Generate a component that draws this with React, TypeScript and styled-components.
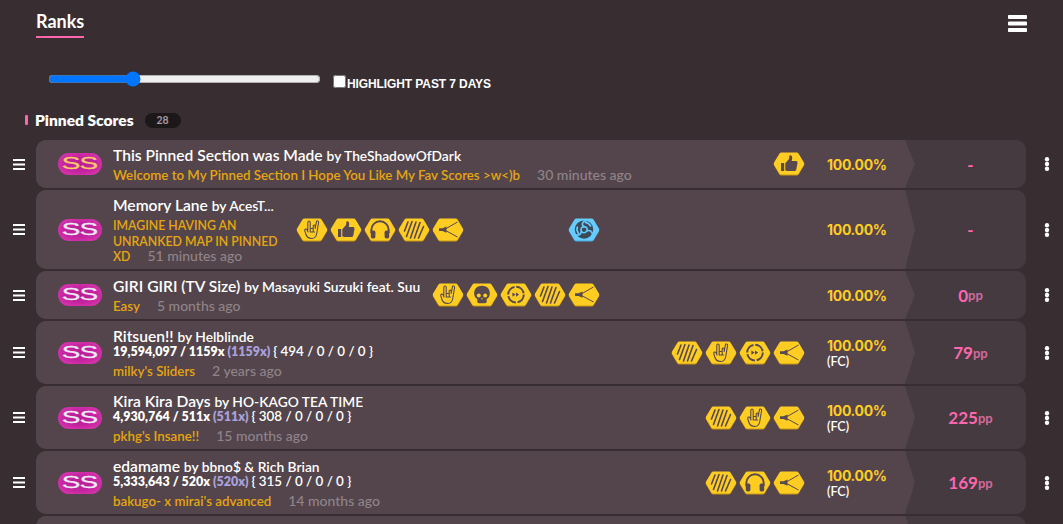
import React from "react";
import styled, { createGlobalStyle } from "styled-components";

const Global = createGlobalStyle`
  html, body { margin: 0; padding: 0; background: #382e32; }
  body { font-family: "Lato", "Noto Sans", sans-serif; color: #fff; }
  #root { height: 524px; overflow: hidden; }
`;

const Page = styled.div`
  height: 524px;
  overflow: hidden;
  background: #382e32;
`;
const Header = styled.header`
  display: flex;
  justify-content: space-between;
  align-items: flex-start;
  padding: 11px 36px 0;
  height: 27px;
`;
const Tab = styled.div`
  font-size: 18px;
  font-weight: 700;
  line-height: 20px;
  height: 25px;
  width: 48px;
  border-bottom: 2px solid #ff66ab;
`;
const Burger = styled.svg`
  width: 19px;
  height: 17px;
  margin-top: 4px;
  display: block;
`;
const Controls = styled.div`
  display: flex;
  align-items: flex-start;
  margin-top: 33px;
  padding-left: 48px;
  height: 35px;
`;
const Slider = styled.input`
  width: 273px;
  height: 16px;
  margin: 0;
`;
const Check = styled.input`
  width: 13px;
  height: 13px;
  margin: 4px 0 0 12px;
`;
const CheckLabel = styled.label`
  font-family: "Liberation Sans", sans-serif;
  font-size: 12px;
  font-weight: 700;
  line-height: 14px;
  margin: 6px 0 0 1px;
  letter-spacing: -0.1px;
`;
const SectionHead = styled.div`
  display: flex;
  align-items: center;
  height: 22px;
  margin: 3px 0 9px 25px;
`;
const SectionBar = styled.span`
  width: 3px;
  height: 10px;
  background: #ff66ab;
  border-radius: 1px;
  margin-right: 7px;
`;
const SectionTitle = styled.span`
  font-size: 15.5px;
  font-weight: 800;
`;
const Count = styled.span`
  margin-left: 11px;
  width: 36px;
  height: 15px;
  line-height: 15px;
  text-align: center;
  border-radius: 8px;
  background: #1c1719;
  color: #a39aa0;
  font-size: 10.5px;
  font-weight: 700;
`;
const List = styled.div`
  display: flex;
  flex-direction: column;
  gap: 2px;
`;
const RowWrap = styled.div`
  display: flex;
  align-items: stretch;
`;
const Handle = styled.div`
  width: 36px;
  box-sizing: border-box;
  display: flex;
  align-items: center;
  justify-content: center;
  padding-left: 2px;
`;
const Card = styled.div`
  flex: 0 0 990px;
  display: flex;
  background: #463a41;
  border-radius: 10px;
  overflow: hidden;
  min-height: 48px;
`;
const Main = styled.div`
  flex: 0 0 879px;
  display: flex;
  align-items: center;
  background: #54454c;
  clip-path: polygon(0 0, 869px 0, 100% 50%, 869px 100%, 0 100%);
`;
const RankCell = styled.div`
  flex: 0 0 77px;
  display: flex;
  justify-content: center;
  padding-left: 11px;
  box-sizing: border-box;
`;
const RankPill = styled.div<{ $gold?: boolean }>`
  width: 44px;
  height: 22px;
  border-radius: 11px;
  background: radial-gradient(ellipse at center, #b81d94 0%, #c4249f 50%, #e23fb6 100%);
  display: flex;
  align-items: center;
  justify-content: center;
  font-family: "Liberation Sans", sans-serif;
  font-size: 18px;
  line-height: 22px;
  letter-spacing: -0.5px;
  color: ${(p) => (p.$gold ? "#ffc96a" : "#efe8f8")};
  -webkit-text-stroke: 0.3px ${(p) => (p.$gold ? "#ffc96a" : "#efe8f8")};
`;
const RankText = styled.span`
  display: block;
  transform: scaleX(1.55) scaleY(0.9);
`;
const Info = styled.div<{ $narrow?: boolean }>`
  flex: 0 0 ${(p) => (p.$narrow ? "173px" : "auto")};
  width: ${(p) => (p.$narrow ? "173px" : "auto")};
  align-self: flex-start;
  padding: 7px 0 4.5px;
`;
const Title = styled.div`
  font-size: 15.6px;
  font-weight: 600;
  line-height: 16px;
  white-space: nowrap;
  overflow: hidden;
  text-overflow: ellipsis;
`;
const Artist = styled.span`
  font-size: 13.8px;
  line-height: 0;
`;
const Stats = styled.div`
  font-size: 12.5px;
  font-weight: 800;
  line-height: 16px;
  white-space: nowrap;
`;
const Combo = styled.span`
  color: #a9a1db;
`;
const Judge = styled.span`
  font-size: 13.4px;
  font-weight: 600;
  line-height: 0;
`;
const Sub = styled.div<{ $tight?: boolean; $upper?: boolean }>`
  margin-top: ${(p) => (p.$tight ? "4px" : "5px")};
  font-size: ${(p) => (p.$upper ? "12.3px" : "13.3px")};
  font-weight: 600;
  line-height: 15.5px;
  color: #e5a50f;
`;
const Ago = styled.span`
  color: #8f8488;
  font-size: 14px;
  line-height: 0;
  font-weight: 500;
  margin-left: 17px;
  white-space: nowrap;
`;
const ModArea = styled.div<{ $inset: number; $split: boolean }>`
  flex: 1;
  min-width: 0;
  display: flex;
  justify-content: ${(p) => (p.$split ? "space-between" : "flex-end")};
  padding: 0 ${(p) => p.$inset}px 0 10px;
`;
const ModGroup = styled.div`
  display: flex;
  gap: 2px;
`;
const ModSvg = styled.svg`
  width: 32px;
  height: 24px;
  display: block;
  flex: none;
`;
const AccCell = styled.div<{ $fc?: boolean }>`
  flex: 0 0 88px;
  padding-top: ${(p) => (p.$fc ? "3px" : "0")};
  box-sizing: border-box;
`;
const Acc = styled.div`
  font-family: "Inter", sans-serif;
  font-size: 14px;
  font-weight: 700;
  line-height: 15px;
  color: #ffcc22;
  letter-spacing: -0.3px;
`;
const FC = styled.div`
  font-size: 12.5px;
  font-weight: 600;
  line-height: 17px;
`;
const PpCell = styled.div`
  flex: 1;
  display: flex;
  align-items: center;
  justify-content: center;
  color: #ff66ab;
  font-size: 17px;
  font-weight: 700;
`;
const PpUnit = styled.span`
  font-size: 13px;
  color: #d26a9a;
`;
const Kebab = styled.div`
  width: 37px;
  box-sizing: border-box;
  padding-left: 5px;
  display: flex;
  align-items: center;
  justify-content: center;
`;

const ink = "#57494f";

const hexPath =
  "M8.5 .6H23.5Q25 .6 25.8 1.9L30.9 10.4Q31.6 11.6 30.9 12.8L25.8 21.3Q25 22.6 23.5 22.6H8.5Q7 22.6 6.2 21.3L1.1 12.8Q.4 11.6 1.1 10.4L6.2 1.9Q7 .6 8.5 .6Z";

const glyphs: Record<string, React.ReactNode> = {
  rock: (
    <path
      d="M11.8 12V4.5Q11.8 3 13 3T14.2 4.5V10.5H17.2V8Q17.2 7 18.2 7T19.2 8V10.5L20.4 3.8Q20.7 2.7 21.7 3T22.6 4.3L21 14Q20.4 20.5 15.8 20.5Q11 20.5 9.8 16L8.8 12.8Q8.5 11.4 9.5 11.1T11.2 12L12 14M14.2 14V10.5M17.2 14V10.5M14.2 14H18.5"
      fill="none"
      stroke={ink}
      strokeWidth="1.1"
      strokeLinejoin="round"
      strokeLinecap="round"
    />
  ),
  thumb: (
    <path
      d="M8 11H11.2V19H8ZM12.3 11.2L15.6 7.5Q16.5 6.4 16.3 4.2Q16.4 2.9 17.6 3.2Q19.8 4 19 7.6L18.7 9H23.2Q24.8 9.2 24.5 11L23.3 17.5Q22.9 19 21.5 19H14.6Q13.2 19 12.3 18.2Z"
      fill={ink}
    />
  ),
  phones: (
    <>
      <path d="M7.3 15V12A8.7 8.7 0 0 1 24.7 12V15" fill="none" stroke={ink} strokeWidth="1.9" />
      <rect x="6.8" y="12.5" width="4.6" height="8" rx="1.7" fill={ink} />
      <rect x="20.6" y="12.5" width="4.6" height="8" rx="1.7" fill={ink} />
    </>
  ),
  stripes: (
    <g stroke={ink} strokeWidth="1.6" strokeLinecap="round">
      <path d="M6.5 13L10 4M8.5 18.5L14 3.5M12.5 20L18 4M16.5 20L22 4.5M20.5 20L25.5 8.5" />
    </g>
  ),
  torch: (
    <>
      <path d="M7 10.2H10.5L14.5 8.5V14.8L10.5 13H7Z" fill={ink} />
      <path d="M14.2 10.5L25.5 4M14.2 12.8L25.5 19" stroke={ink} strokeWidth="1" fill="none" />
    </>
  ),
  skull: (
    <>
      <path
        d="M16 2.8C10.2 2.8 8 7 8.2 11C8.3 13.7 9.8 15.3 11.3 16.1V18.6Q11.3 20.2 13 20.2H19Q20.7 20.2 20.7 18.6V16.1C22.2 15.3 23.7 13.7 23.8 11C24 7 21.8 2.8 16 2.8Z"
        fill={ink}
      />
      <circle cx="12.8" cy="12.4" r="2" fill="#ffcc22" />
      <circle cx="19.2" cy="12.4" r="2" fill="#ffcc22" />
      <path d="M15.1 16.2H16.9L16 14.6Z" fill="#ffcc22" />
    </>
  ),
  rate: (
    <>
      <circle cx="16" cy="11.6" r="7.8" fill="none" stroke={ink} strokeWidth="2" strokeDasharray="10.5 1.75" />
      <path d="M12.4 9.4L15.6 11.6L12.4 13.8ZM16 9.4L19.2 11.6L16 13.8Z" fill={ink} />
    </>
  ),
  swirl: (
    <>
      <circle cx="16" cy="11.6" r="9.2" fill="#3b4a58" />
      <g fill="none" stroke="#66ccff" strokeWidth="1.6" strokeLinecap="round">
        <path d="M16 8.6C13 6.6 14.2 3.6 18.2 2.6" />
        <path d="M18.6 13.1C21.8 11.5 24.4 13.5 24.8 17.6" />
        <path d="M13.4 13.1C13.2 16.8 10.2 18 6.8 16.4" />
        <path d="M16 8.6C18.6 8.8 20 10.6 18.6 13.1C17.2 15.4 14.8 15.2 13.4 13.1C12.2 11 13.6 8.6 16 8.6Z" />
        <path d="M22.6 8C21.2 5.6 19.4 4.6 17.4 4.4" />
        <path d="M9.4 9.2C8.4 11.4 9 13.6 10.6 15.6" />
      </g>
    </>
  ),
};

function Mod({ type }: { type: string }) {
  const blue = type === "swirl";
  const id = `clip-${type}`;
  return (
    <ModSvg viewBox="0 0 32 24" aria-hidden>
      <defs>
        <clipPath id={id}>
          <path d={hexPath} />
        </clipPath>
      </defs>
      <path d={hexPath} transform="translate(0 1)" fill={blue ? "#4aa6d8" : "#c99a12"} />
      <path d={hexPath} fill={blue ? "#66ccff" : "#ffcc22"} />
      <g clipPath={`url(#${id})`}>{glyphs[type]}</g>
    </ModSvg>
  );
}

const Bars = () => (
  <svg width="12" height="11" viewBox="0 0 12 11" aria-hidden>
    <path d="M0 0h12v2H0zM0 4.5h12v2H0zM0 9h12v2H0z" fill="#fff" />
  </svg>
);
const Dots = () => (
  <svg width="6" height="14" viewBox="0 0 6 14" aria-hidden>
    <circle cx="3" cy="2.2" r="2.2" fill="#fff" />
    <circle cx="3" cy="7" r="2.2" fill="#fff" />
    <circle cx="3" cy="11.8" r="2.2" fill="#fff" />
  </svg>
);

type Score = {
  title: string;
  artist: string;
  stats?: [string, string, string];
  sub: string;
  ago: string;
  mods: string[];
  extra?: string[];
  inset: number;
  fc?: boolean;
  pp: string;
  gold?: boolean;
  narrow?: boolean;
};

const scores: Score[] = [
  { title: "This Pinned Section was Made", artist: "TheShadowOfDark", sub: "Welcome to My Pinned Section I Hope You Like My Fav Scores >w<)b", ago: "30 minutes ago", mods: ["thumb"], inset: 22, pp: "-", gold: true },
  { title: "Memory Lane", artist: "AcesT...", sub: "IMAGINE HAVING AN UNRANKED MAP IN PINNED XD", ago: "51 minutes ago", mods: ["rock", "thumb", "phones", "stripes", "torch"], extra: ["swirl"], inset: 227, pp: "-", narrow: true },
  { title: "GIRI GIRI (TV Size)", artist: "Masayuki Suzuki feat. Suu", sub: "Easy", ago: "5 months ago", mods: ["rock", "skull", "rate", "stripes", "torch"], inset: 227, pp: "0" },
  { title: "Ritsuen!!", artist: "Helblinde", stats: ["19,594,097 / 1159x", "(1159x)", "{ 494 / 0 / 0 / 0 }"], sub: "milky's Sliders", ago: "2 years ago", mods: ["stripes", "rock", "rate", "torch"], inset: 22, fc: true, pp: "79" },
  { title: "Kira Kira Days", artist: "HO-KAGO TEA TIME", stats: ["4,930,764 / 511x", "(511x)", "{ 308 / 0 / 0 / 0 }"], sub: "pkhg's Insane!!", ago: "15 months ago", mods: ["stripes", "rock", "torch"], inset: 22, fc: true, pp: "225" },
  { title: "edamame", artist: "bbno$ & Rich Brian", stats: ["5,333,643 / 520x", "(520x)", "{ 315 / 0 / 0 / 0 }"], sub: "bakugo- x mirai's advanced", ago: "14 months ago", mods: ["stripes", "phones", "torch"], inset: 22, fc: true, pp: "169" },
];

function Row({ s }: { s: Score }) {
  return (
    <RowWrap>
      <Handle>
        <Bars />
      </Handle>
      <Card>
        <Main>
          <RankCell>
            <RankPill $gold={s.gold}>
              <RankText>SS</RankText>
            </RankPill>
          </RankCell>
          <Info $narrow={s.narrow}>
            <Title>
              <span>{s.title}</span> <Artist>by {s.artist}</Artist>
            </Title>
            {s.stats && (
              <Stats>
                <span>{s.stats[0]}</span> <Combo>{s.stats[1]}</Combo> <Judge>{s.stats[2]}</Judge>
              </Stats>
            )}
            <Sub $tight={!!s.stats} $upper={s.narrow}>
              <span>{s.sub}</span>
              <Ago>{s.ago}</Ago>
            </Sub>
          </Info>
          <ModArea $inset={s.inset} $split={!!s.extra}>
            <ModGroup>
              {s.mods.map((m, i) => (
                <Mod key={i} type={m} />
              ))}
            </ModGroup>
            {s.extra && (
              <ModGroup>
                {s.extra.map((m, i) => (
                  <Mod key={i} type={m} />
                ))}
              </ModGroup>
            )}
          </ModArea>
          <AccCell $fc={s.fc}>
            <Acc>100.00%</Acc>
            {s.fc && <FC>(FC)</FC>}
          </AccCell>
        </Main>
        <PpCell>
          {s.pp}
          {s.pp !== "-" && <PpUnit>pp</PpUnit>}
        </PpCell>
      </Card>
      <Kebab>
        <Dots />
      </Kebab>
    </RowWrap>
  );
}

export default function App() {
  return (
    <Page>
      <Global />
      <Header>
        <Tab>Ranks</Tab>
        <Burger viewBox="0 0 19 17" aria-hidden>
          <path d="M1 0h17a1 1 0 0 1 1 1.5v1a1 1 0 0 1-1 1.5H1a1 1 0 0 1-1-1.5v-1A1 1 0 0 1 1 0zM1 6.5h17a1 1 0 0 1 1 1.5v1a1 1 0 0 1-1 1.5H1a1 1 0 0 1-1-1.5V8a1 1 0 0 1 1-1.5zM1 13h17a1 1 0 0 1 1 1.5v1a1 1 0 0 1-1 1.5H1a1 1 0 0 1-1-1.5v-1A1 1 0 0 1 1 13z" fill="#fff" />
        </Burger>
      </Header>
      <Controls>
        <Slider type="range" min={0} max={100} defaultValue={30} />
        <Check type="checkbox" id="hl" />
        <CheckLabel htmlFor="hl">HIGHLIGHT PAST 7 DAYS</CheckLabel>
      </Controls>
      <SectionHead>
        <SectionBar />
        <SectionTitle>Pinned Scores</SectionTitle>
        <Count>28</Count>
      </SectionHead>
      <List>
        {scores.map((s, i) => (
          <Row key={i} s={s} />
        ))}
        <RowWrap>
          <Handle />
          <Card>
            <Main />
          </Card>
        </RowWrap>
      </List>
    </Page>
  );
}
